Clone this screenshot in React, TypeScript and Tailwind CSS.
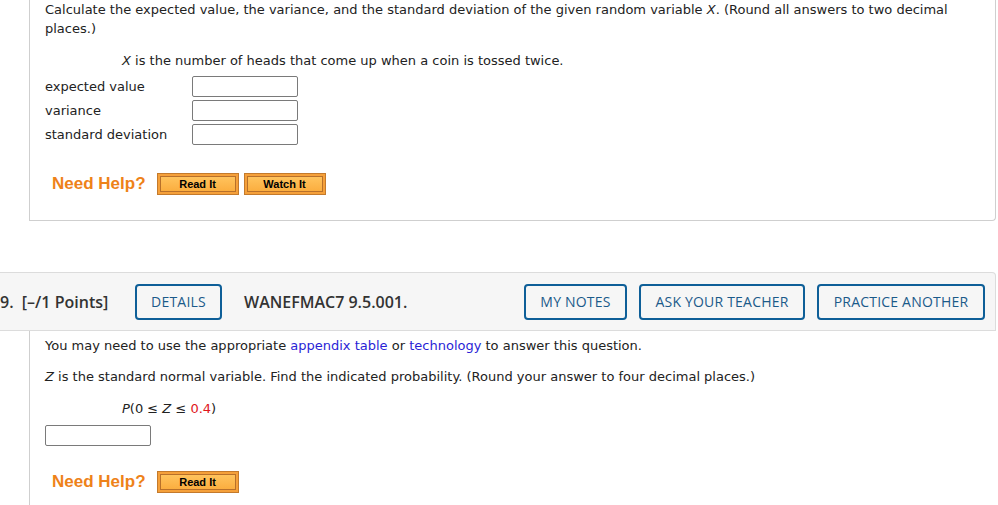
import React from 'react';

const body = { fontFamily: '"DejaVu Sans", Verdana, sans-serif' };
const head = { fontFamily: '"Open Sans", "Noto Sans", sans-serif' };
const arial = { fontFamily: '"Liberation Sans", Arial, sans-serif' };

const HelpButton: React.FC<{ label: string }> = ({ label }) => (
  <div className="border border-[#c47a2c] bg-[#f5a03a] p-[2px]">
    <div
      className="flex h-[16px] w-[76px] items-center justify-center border border-[#b8702a] bg-gradient-to-b from-[#ffc35c] to-[#fbae3f] text-[11px] font-bold text-black"
      style={arial}
    >
      {label}
    </div>
  </div>
);

const NeedHelp: React.FC<{ buttons: string[] }> = ({ buttons }) => (
  <div className="flex items-center gap-[5px] pl-[7px]">
    <span className="mr-[6px] text-[17px] font-bold text-[#ee8219]" style={arial}>
      Need Help?
    </span>
    {buttons.map((b) => (
      <HelpButton key={b} label={b} />
    ))}
  </div>
);

const Field: React.FC<{ w?: string }> = ({ w = 'w-[106px]' }) => (
  <div className={`${w} h-[21px] rounded-[2px] border border-[#7a7a7a] bg-white`} />
);

const HeadButton: React.FC<{ label: string; w: string }> = ({ label, w }) => (
  <button
    className={`${w} flex h-[36px] items-center justify-center rounded-[4px] border-2 border-[#0e5f98] bg-[#f6f6f6] text-[14px] font-medium tracking-[0.2px] text-[#1b5a8a]`}
    style={head}
  >
    {label}
  </button>
);

export default function App() {
  return (
    <div className="h-[505px] w-[998px] overflow-hidden bg-white text-[13px] text-[#222]" style={body}>
      {/* question 8 body */}
      <div className="ml-[29px] h-[221px] w-[967px] rounded-br-[4px] border-r border-b border-l border-[#cfcfcf] px-[15px]">
        <p className="leading-[19px]">
          Calculate the expected value, the variance, and the standard deviation of the given random variable{' '}
          <i>X</i>. (Round all answers to two decimal places.)
        </p>
        <p className="mt-[13px] pl-[77px] leading-[19px]">
          <i>X</i> is the number of heads that come up when a coin is tossed twice.
        </p>
        <div className="mt-[6px] grid grid-cols-[147px_106px] gap-y-[3px]">
          <span className="leading-[21px]">expected value</span>
          <Field />
          <span className="leading-[21px]">variance</span>
          <Field />
          <span className="leading-[21px]">standard deviation</span>
          <Field />
        </div>
        <div className="mt-[26px]">
          <NeedHelp buttons={['Read It', 'Watch It']} />
        </div>
      </div>

      {/* question 9 header */}
      <div className="mt-[51px] flex h-[59px] w-[996px] items-center rounded-tr-[4px] border-t border-r border-b border-[#dcdcdc] bg-[#f6f6f6] pr-[10px] text-[#333]" style={head}>
        <span className="w-[135px] text-[16px] font-semibold">9.&nbsp; [–/1 Points]</span>
        <HeadButton label="DETAILS" w="w-[87px]" />
        <span className="ml-[22px] text-[16px] font-semibold">WANEFMAC7 9.5.001.</span>
        <div className="ml-auto flex gap-[12px]">
          <HeadButton label="MY NOTES" w="w-[103px]" />
          <HeadButton label="ASK YOUR TEACHER" w="w-[166px]" />
          <HeadButton label="PRACTICE ANOTHER" w="w-[168px]" />
        </div>
      </div>

      {/* question 9 body */}
      <div className="ml-[29px] h-[200px] w-[967px] border-l border-[#cfcfcf] px-[15px] pt-[5px]">
        <p className="leading-[19px]">
          You may need to use the appropriate <span className="text-[#2a1fd6]">appendix table</span> or{' '}
          <span className="text-[#2a1fd6]">technology</span> to answer this question.
        </p>
        <p className="mt-[12px] leading-[19px]">
          <i>Z</i> is the standard normal variable. Find the indicated probability. (Round your answer to four decimal places.)
        </p>
        <p className="mt-[13px] pl-[77px] leading-[19px]">
          <i>P</i>(0 ≤ <i>Z</i> ≤ <span className="text-[#e0161b]">0.4</span>)
        </p>
        <div className="mt-[7px]">
          <Field />
        </div>
        <div className="mt-[23px]">
          <NeedHelp buttons={['Read It']} />
        </div>
      </div>
    </div>
  );
}
